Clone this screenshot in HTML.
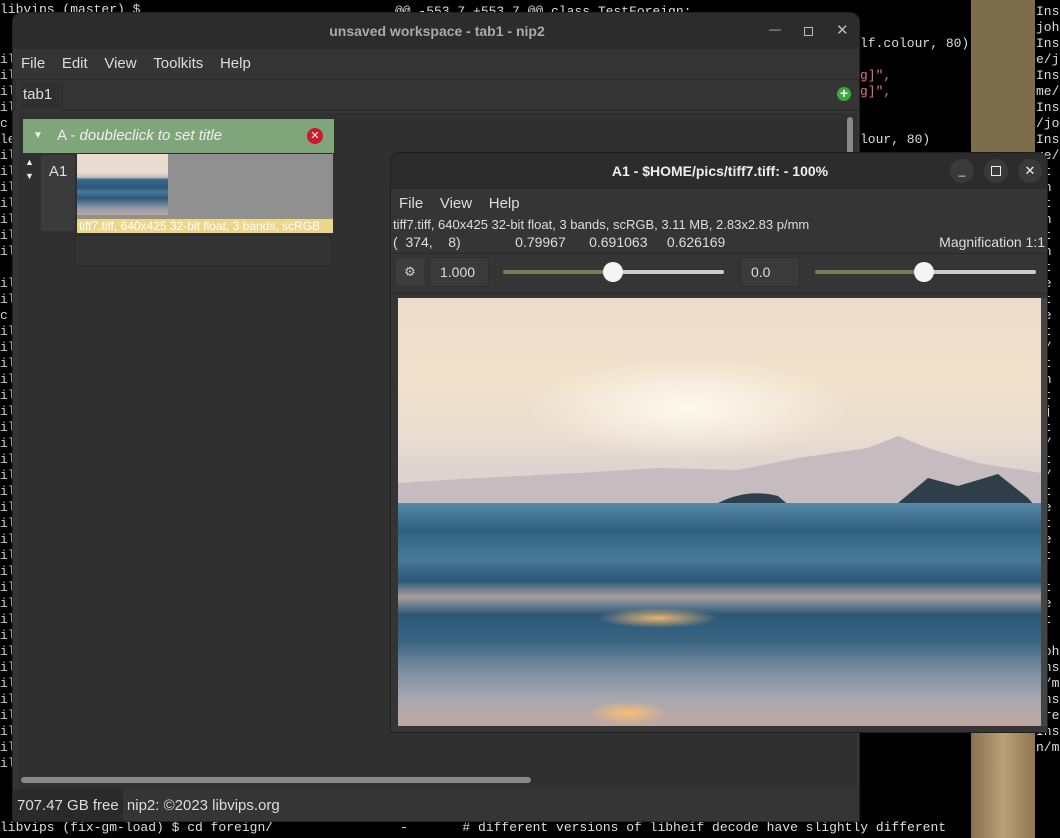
<!DOCTYPE html>
<html><head><style>
*{margin:0;padding:0;box-sizing:border-box}
body{width:1060px;height:838px;background:#000;position:relative;overflow:hidden;font-family:"Liberation Sans","DejaVu Sans",sans-serif;color:#ddd}
.mono{font-family:"Liberation Mono",monospace;font-size:13px;color:#ddd;position:absolute;white-space:pre;line-height:16px}
.abs{position:absolute}
</style></head><body>
<div class="mono" style="left:0px;top:2px">libvips (master) $</div>
<div class="mono" style="left:0px;top:820px">libvips (fix-gm-load) $ cd foreign/</div>
<div class="mono" style="left:0px;top:52px;color:#ccc">il
il
il
il
c
le:
il
il
il
il
il
il
il

il
il
c
il
il
il
il
il
il
il
il
il
il
il
il
il
il
il
il
il
il
il
il
il
il
il
il
il
il
il
il</div>
<div class="mono" style="left:395px;top:4px">@@ -553,7 +553,7 @@ class TestForeign:</div>
<div class="mono" style="left:860px;top:36px">lf.colour, 80)</div>
<div class="mono" style="left:860px;top:68px;color:#d77">g]",</div>
<div class="mono" style="left:860px;top:84px;color:#d77">g]",</div>
<div class="mono" style="left:860px;top:132px">lour, 80)</div>
<div class="mono" style="left:400px;top:820px">-       # different versions of libheif decode have slightly different</div>
<div class="abs" style="left:971px;top:0px;width:64px;height:838px;background:#7b6d4a"></div>
<div class="abs" style="left:971px;top:730px;width:64px;height:108px;background:linear-gradient(90deg,#8a7050,#b8a078,#907650)"></div>
<div class="mono" style="left:1036px;top:4px">Inst
john
Inst
e/jo
Inst
me/j
Inst
/joh
Inst
me/
st
hn
st
on
st
oh
st
me
st
me
st
n/
st
oh
st
/j
st
n/
st
n/
st
me
st
me
st
o
st
me
st
/
john
Inst
e/ma
Inst
are/
Inst
n/mo</div>

<!-- main window -->
<div class="abs" style="left:12px;top:12px;width:848px;height:810px;background:#353535;border-radius:10px 10px 0 0;overflow:hidden;border:1px solid #222">
 <div class="abs" style="left:0px;top:0px;width:848px;height:36px;background:#2c2c2c;text-align:center;line-height:36px;font-weight:bold;font-size:14px;color:#aaa">unsaved workspace - tab1 - nip2</div>
 <div class="abs" style="left:756px;top:9px;color:#bbb;font-size:12px">&#8212;</div>
 <div class="abs" style="left:791px;top:14px;width:9px;height:9px;border:1.5px solid #bbb"></div>
 <div class="abs" style="left:823px;top:8px;color:#bbb;font-size:15px">✕</div>
 <div class="abs" style="left:0px;top:36px;width:848px;height:30px;font-size:15px;color:#ddd;line-height:30px;padding-left:8px">File&nbsp;&nbsp;&nbsp;&nbsp;Edit&nbsp;&nbsp;&nbsp;&nbsp;View&nbsp;&nbsp;&nbsp;&nbsp;Toolkits&nbsp;&nbsp;&nbsp;&nbsp;Help</div>
 <div class="abs" style="left:0px;top:66px;width:848px;height:1px;background:#2a2a2a"></div>
 <div class="abs" style="left:0px;top:97px;width:848px;height:1px;background:#282828"></div>
 <div class="abs" style="left:1px;top:66px;width:49px;height:32px;background:#353535;border:1px solid #2a2a2a;border-bottom:none"></div>
 <div class="abs" style="left:8px;top:69px;width:40px;height:26px;background:#303030;font-size:15px;line-height:26px;padding-left:2px">tab1</div>
 <div class="abs" style="left:824px;top:74px;width:14px;height:14px;border-radius:50%;background:#3aaa3a;color:#fff;font-size:14px;line-height:13px;text-align:center;font-weight:bold">+</div>
 <div class="abs" style="left:6px;top:100px;width:838px;height:676px;background:#303030"></div>
 <div class="abs" style="left:834px;top:104px;width:6px;height:40px;background:#888;border-radius:3px"></div>
 <div class="abs" style="left:8px;top:764px;width:510px;height:6px;background:#888;border-radius:3px"></div>
 <div class="abs" style="left:10px;top:106px;width:311px;height:34px;background:#7fa57b;line-height:34px;font-size:15px;color:#eee">
  <span style="position:absolute;left:10px;top:0px;font-size:10px">▼</span>
  <span style="position:absolute;left:34px">A - <i>doubleclick to set title</i></span>
  <span style="position:absolute;left:284px;top:9px;width:16px;height:16px;border-radius:50%;background:#d0182c;color:#fff;font-size:11px;line-height:16px;text-align:center;font-weight:bold">✕</span>
 </div>
 <div class="abs" style="left:12px;top:142px;font-size:9px;color:#eee;line-height:14px">▲<br>▼</div>
 <div class="abs" style="left:28px;top:142px;width:34px;height:76px;background:#3b3b3b;border-radius:3px;font-size:15px;text-align:center;padding-top:8px">A1</div>
 <div class="abs" style="left:64px;top:141px;width:256px;height:65px;background:#909090"></div>
 <div class="abs" style="left:64px;top:141px;width:91px;height:61px;background:linear-gradient(180deg,#ecdccb 0%,#e8dcd0 30%,#c8c0c0 38%,#3a6a8a 42%,#2a5878 55%,#4a7a98 62%,#2c5878 72%,#8a98a8 88%,#c0a8a0 100%)"></div>
 <div class="abs" style="left:64px;top:206px;width:256px;height:14px;background:#ecd68a;color:#fff;font-size:12px;line-height:14px;padding-left:2px;white-space:nowrap;overflow:hidden">tiff7.tiff, 640x425 32-bit float, 3 bands, scRGB</div>
 <div class="abs" style="left:61px;top:222px;width:258px;height:31px;background:#333;border:1px solid #2a2a2a;border-radius:3px"></div>
 <div class="abs" style="left:0px;top:776px;width:848px;height:34px;background:#353535;font-size:15px;line-height:34px"><span style="background:#2a2a2a;padding:8px 4px">707.47 GB free</span>&nbsp;nip2: ©2023 libvips.org</div>
</div>

<!-- image window -->
<div class="abs" style="left:390px;top:152px;width:658px;height:581px;background:#353535;border-radius:10px 10px 0 0;overflow:hidden;border:1px solid #1e1e1e">
 <div class="abs" style="left:0px;top:0px;width:658px;height:36px;background:#2c2c2c;text-align:center;line-height:36px;font-weight:bold;font-size:14px;color:#eee">A1 - $HOME/pics/tiff7.tiff: - 100%</div>
 <div class="abs" style="left:559px;top:6px;width:24px;height:24px;border-radius:50%;background:#3a3a3a;color:#eee;text-align:center;font-size:12px;line-height:22px">_</div>
 <div class="abs" style="left:593px;top:6px;width:24px;height:24px;border-radius:50%;background:#3a3a3a"><div class="abs" style="left:7px;top:7px;width:10px;height:10px;border:1.5px solid #eee"></div></div>
 <div class="abs" style="left:627px;top:6px;width:24px;height:24px;border-radius:50%;background:#3a3a3a;color:#eee;text-align:center;font-size:13px;line-height:24px">✕</div>
 <div class="abs" style="left:0px;top:36px;width:658px;height:30px;font-size:15px;line-height:30px;padding-left:8px">File&nbsp;&nbsp;&nbsp;&nbsp;View&nbsp;&nbsp;&nbsp;&nbsp;Help</div>
 <div class="abs" style="left:2px;top:64px;font-size:13px;color:#ddd;white-space:nowrap">tiff7.tiff, 640x425 32-bit float, 3 bands, scRGB, 3.11 MB, 2.83x2.83 p/mm</div>
 <div class="abs" style="left:2px;top:81px;font-size:14px;color:#ddd;white-space:pre">(  374,    8)              0.79967      0.691063     0.626169</div>
 <div class="abs" style="right:2px;top:81px;font-size:14px;color:#ddd">Magnification 1:1</div>
 <div class="abs" style="left:0px;top:100px;width:658px;height:1px;background:#2a2a2a"></div>
 <div class="abs" style="left:5px;top:105px;width:28px;height:28px;background:#3d3d3d;border-radius:3px;color:#ccc;font-size:13px;text-align:center;line-height:28px">⚙</div>
 <div class="abs" style="left:38px;top:104px;width:60px;height:30px;background:#3a3a3a;border:1px solid #2e2e2e;border-radius:3px;font-size:14px;line-height:28px;padding-left:10px">1.000</div>
 <div class="abs" style="left:112px;top:117px;width:109px;height:4px;background:#7a7a5a;border-radius:2px"></div>
 <div class="abs" style="left:221px;top:117px;width:112px;height:4px;background:#ccc;border-radius:2px"></div>
 <div class="abs" style="left:212px;top:109px;width:20px;height:20px;background:#f4f4f4;border-radius:50%"></div>
 <div class="abs" style="left:349px;top:104px;width:60px;height:30px;background:#3a3a3a;border:1px solid #2e2e2e;border-radius:3px;font-size:14px;line-height:28px;padding-left:10px">0.0</div>
 <div class="abs" style="left:424px;top:117px;width:109px;height:4px;background:#7a7a5a;border-radius:2px"></div>
 <div class="abs" style="left:533px;top:117px;width:112px;height:4px;background:#ccc;border-radius:2px"></div>
 <div class="abs" style="left:523px;top:109px;width:20px;height:20px;background:#f4f4f4;border-radius:50%"></div>
 <div class="abs" style="left:0px;top:140px;width:658px;height:1px;background:#2a2a2a"></div>
 <svg class="abs" style="left:7px;top:145px" width="643" height="428" viewBox="0 0 643 428">
  <defs>
   <linearGradient id="sky" x1="0" y1="0" x2="0" y2="1">
    <stop offset="0" stop-color="#ecdccb"/><stop offset="0.2" stop-color="#f0e2cc"/><stop offset="0.33" stop-color="#eadcd0"/><stop offset="0.4" stop-color="#ddd4d0"/>
   </linearGradient>
   <linearGradient id="sea" x1="0" y1="0" x2="0" y2="1">
    <stop offset="0" stop-color="#5a8aa8"/><stop offset="0.12" stop-color="#2e6080"/><stop offset="0.25" stop-color="#4a7a98"/><stop offset="0.35" stop-color="#2a5878"/><stop offset="0.42" stop-color="#a8a0a0"/><stop offset="0.5" stop-color="#2c5878"/><stop offset="0.62" stop-color="#3a6482"/><stop offset="0.75" stop-color="#7a8ea0"/><stop offset="0.88" stop-color="#a8a8b0"/><stop offset="1" stop-color="#c0a8a0"/>
   </linearGradient>
   <radialGradient id="sun" cx="0.5" cy="0.5" r="0.5"><stop offset="0" stop-color="#fffaf0" stop-opacity="0.95"/><stop offset="1" stop-color="#fffaf0" stop-opacity="0"/></radialGradient>
   <radialGradient id="glint" cx="0.5" cy="0.5" r="0.5"><stop offset="0" stop-color="#ffc070" stop-opacity="0.9"/><stop offset="1" stop-color="#ffc070" stop-opacity="0"/></radialGradient>
  </defs>
  <rect width="643" height="428" fill="url(#sky)"/>
  <ellipse cx="290" cy="110" rx="160" ry="50" fill="url(#sun)"/>
  <path d="M0 185 L80 180 L180 175 L260 170 L340 172 L400 160 L470 150 L500 138 L530 150 L580 165 L643 175 L643 215 L0 215Z" fill="#c6bcc0"/>
  <path d="M320 205 Q350 190 380 198 L400 215 L320 215Z M500 205 L530 180 L560 188 L600 176 L630 200 L643 215 L500 215Z" fill="#2e3e4a"/>
  <rect y="205" width="643" height="223" fill="url(#sea)"/>
  <ellipse cx="260" cy="320" rx="60" ry="10" fill="url(#glint)"/>
  <ellipse cx="230" cy="415" rx="40" ry="12" fill="url(#glint)"/>
 </svg>
 <div class="abs" style="left:650px;top:145px;width:6px;height:428px;background:#444"></div>
</div>
</body></html>
